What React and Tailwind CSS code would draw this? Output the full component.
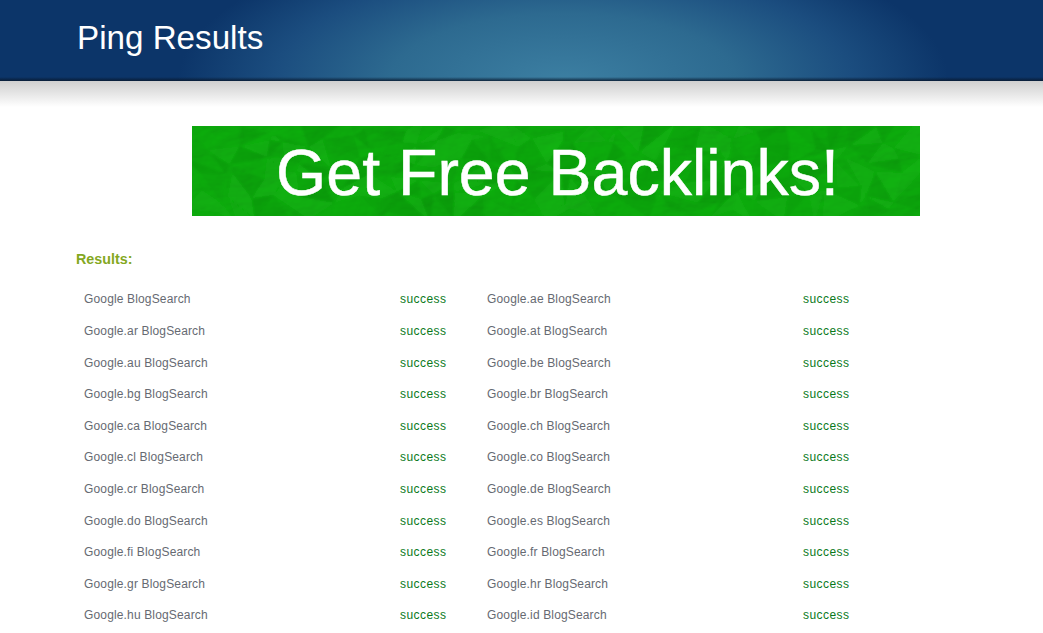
import React from "react";

const rows = [
  ["Google BlogSearch", "Google.ae BlogSearch"],
  ["Google.ar BlogSearch", "Google.at BlogSearch"],
  ["Google.au BlogSearch", "Google.be BlogSearch"],
  ["Google.bg BlogSearch", "Google.br BlogSearch"],
  ["Google.ca BlogSearch", "Google.ch BlogSearch"],
  ["Google.cl BlogSearch", "Google.co BlogSearch"],
  ["Google.cr BlogSearch", "Google.de BlogSearch"],
  ["Google.do BlogSearch", "Google.es BlogSearch"],
  ["Google.fi BlogSearch", "Google.fr BlogSearch"],
  ["Google.gr BlogSearch", "Google.hr BlogSearch"],
  ["Google.hu BlogSearch", "Google.id BlogSearch"],
];

// crumpled paper facets for the banner, same every render
function makeFacets() {
  let seed = 7;
  const rand = () => {
    seed = (seed * 1103515245 + 12345) % 2147483648;
    return seed / 2147483648;
  };
  const cols = 32;
  const lines = 5;
  const pts = [];
  for (let y = 0; y <= lines; y++) {
    const row = [];
    for (let x = 0; x <= cols; x++) {
      row.push([
        (x + (rand() - 0.5) * 0.95) * (728 / cols),
        (y + (rand() - 0.5) * 0.95) * (90 / lines),
      ]);
    }
    pts.push(row);
  }
  const facets = [];
  for (let y = 0; y < lines; y++) {
    for (let x = 0; x < cols; x++) {
      const a = pts[y][x];
      const b = pts[y][x + 1];
      const c = pts[y + 1][x + 1];
      const d = pts[y + 1][x];
      const tris = rand() > 0.5 ? [[a, b, c], [a, c, d]] : [[a, b, d], [b, c, d]];
      tris.forEach((t) => {
        const v = rand();
        facets.push({
          points: t.map((p) => p.join(",")).join(" "),
          fill: v > 0.5 ? "#2cc42c" : "#007000",
          opacity: Math.abs(v - 0.5) * 0.42,
        });
      });
    }
  }
  return facets;
}

const facets = makeFacets();

function PaperTexture() {
  return (
    <svg className="absolute inset-0 h-full w-full" viewBox="0 0 728 90" preserveAspectRatio="none">
      <filter id="crumple" x="0" y="0" width="100%" height="100%">
        <feTurbulence type="fractalNoise" baseFrequency="0.02 0.035" numOctaves="4" seed="4" />
        <feDiffuseLighting surfaceScale="2" diffuseConstant="1.08" lightingColor="#0aaa0a">
          <feDistantLight azimuth="225" elevation="65" />
        </feDiffuseLighting>
      </filter>
      <filter id="soften">
        <feGaussianBlur stdDeviation="0.8" />
      </filter>
      <rect width="728" height="90" fill="#0ca50c" filter="url(#crumple)" />
      <g filter="url(#soften)">
        {facets.map((f, i) => (
          <polygon key={i} points={f.points} fill={f.fill} opacity={f.opacity} />
        ))}
      </g>
    </svg>
  );
}

function Result({ name }) {
  return (
    <>
      <div className="pl-2 tracking-[0.15px] text-[#666a72]">{name}</div>
      <div className="tracking-[0.45px] text-[#0b7a1c]">success</div>
    </>
  );
}

export default function App() {
  return (
    <div className="h-[633px] overflow-hidden bg-white font-['Liberation_Sans',Arial,sans-serif]">
      <header className="h-[81px] bg-[linear-gradient(to_top,rgba(8,24,45,0.85),transparent_4px),radial-gradient(ellipse_385px_150px_at_54%_100%,#3c7fa2_0%,#2d6a90_45%,#1b4d7f_75%,#0c3569_100%)] pl-[77px] pt-4">
        <h1 className="text-[33.2px] leading-[44px] font-normal text-white">Ping Results</h1>
      </header>
      <div className="h-[26px] bg-gradient-to-b from-[#cfcfcf] to-white" />

      <div className="relative ml-[192px] mt-[19px] flex h-[90px] w-[728px] items-center justify-center overflow-hidden">
        <PaperTexture />
        <span className="relative pl-[3px] pt-[5px] text-[64.5px] leading-[85px] text-white [-webkit-text-stroke:0.5px_white]">Get Free Backlinks!</span>
      </div>

      <h2 className="ml-[76px] mt-[34px] text-[14.3px] leading-[18px] font-bold text-[#84a81f]">Results:</h2>

      <div className="ml-[76px] mt-[15.6px] grid grid-cols-[324px_79px_324px_79px] auto-rows-[31.6px] items-center text-xs">
        {rows.map(([left, right]) => (
          <React.Fragment key={left}>
            <Result name={left} />
            <Result name={right} />
          </React.Fragment>
        ))}
      </div>
    </div>
  );
}
